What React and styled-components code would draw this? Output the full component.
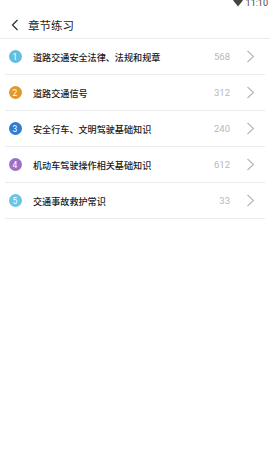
import styled, { createGlobalStyle } from "styled-components";

const GlobalStyle = createGlobalStyle`
  html, body {
    margin: 0;
    padding: 0;
    background: #fff;
    font-family: Roboto, "Noto Sans CJK SC", sans-serif;
  }
`;

const chapters = [
  { no: 1, title: "道路交通安全法律、法规和规章", count: 568, color: "#62bfe0" },
  { no: 2, title: "道路交通信号", count: 312, color: "#e0992f" },
  { no: 3, title: "安全行车、文明驾驶基础知识", count: 240, color: "#2e7bd3" },
  { no: 4, title: "机动车驾驶操作相关基础知识", count: 612, color: "#9f6fc7" },
  { no: 5, title: "交通事故救护常识", count: 33, color: "#6ac4e5" },
];

const App = () => {
  return (
    <Page>
      <GlobalStyle />
      <StatusBar>
        <svg width="10" height="8" viewBox="0 0 10 8">
          <path d="M0 1.2 Q5 -1.6 10 1.2 L5 7.6 Z" fill="#444" />
        </svg>
        <Clock>11:10</Clock>
      </StatusBar>
      <Header>
        <Back>
          <svg width="8" height="12" viewBox="0 0 8 12">
            <path d="M6.5 1 L1.5 6 L6.5 11" fill="none" stroke="#333" strokeWidth="1.3" />
          </svg>
        </Back>
        <Title>章节练习</Title>
      </Header>
      <List>
        {chapters.map((c) => (
          <Row key={c.no}>
            <Badge $color={c.color}>{c.no}</Badge>
            <Name>{c.title}</Name>
            <Count>{c.count}</Count>
            <Chevron>
              <svg width="9" height="13" viewBox="0 0 9 13">
                <path d="M1.5 1 L7.5 6.5 L1.5 12" fill="none" stroke="#b5b5b5" strokeWidth="1.1" />
              </svg>
            </Chevron>
          </Row>
        ))}
      </List>
    </Page>
  );
};

const Page = styled.div`
  width: 270px;
  height: 453px;
  background: #fff;
  overflow: hidden;
`;

const StatusBar = styled.div`
  height: 10px;
  display: flex;
  justify-content: flex-end;
  align-items: flex-start;
  gap: 3px;
  padding-right: 2px;
  overflow: hidden;
  svg {
    margin-top: -1px;
  }
`;

const Clock = styled.span`
  font-size: 9px;
  line-height: 9px;
  margin-top: -1px;
  color: #444;
  font-family: Roboto, sans-serif;
`;

const Header = styled.div`
  height: 28px;
  display: flex;
  align-items: center;
  border-bottom: 1px solid #ececec;
`;

const Back = styled.div`
  width: 28px;
  display: flex;
  justify-content: center;
  padding-left: 2px;
  box-sizing: border-box;
  margin-top: 2px;
`;

const Title = styled.div`
  font-size: 11.5px;
  color: #222;
  margin-top: 2px;
`;

const List = styled.div`
  margin: 0 5px;
`;

const Row = styled.div`
  height: 35px;
  display: flex;
  align-items: center;
  border-bottom: 1px solid #ebebeb;
`;

const Badge = styled.div`
  width: 13px;
  height: 13px;
  border-radius: 50%;
  background: ${(p) => p.$color};
  color: #fff;
  font-size: 8.5px;
  display: flex;
  align-items: center;
  justify-content: center;
  margin-left: 3.5px;
  margin-right: 11.5px;
  flex-shrink: 0;
`;

const Name = styled.div`
  flex: 1;
  font-size: 9.1px;
  font-weight: 500;
  color: #1a1a1a;
  white-space: nowrap;
`;

const Count = styled.div`
  font-size: 9.5px;
  color: #b8b8b8;
  margin-right: 16px;
`;

const Chevron = styled.div`
  display: flex;
  margin-right: 10px;
`;

export default App;
